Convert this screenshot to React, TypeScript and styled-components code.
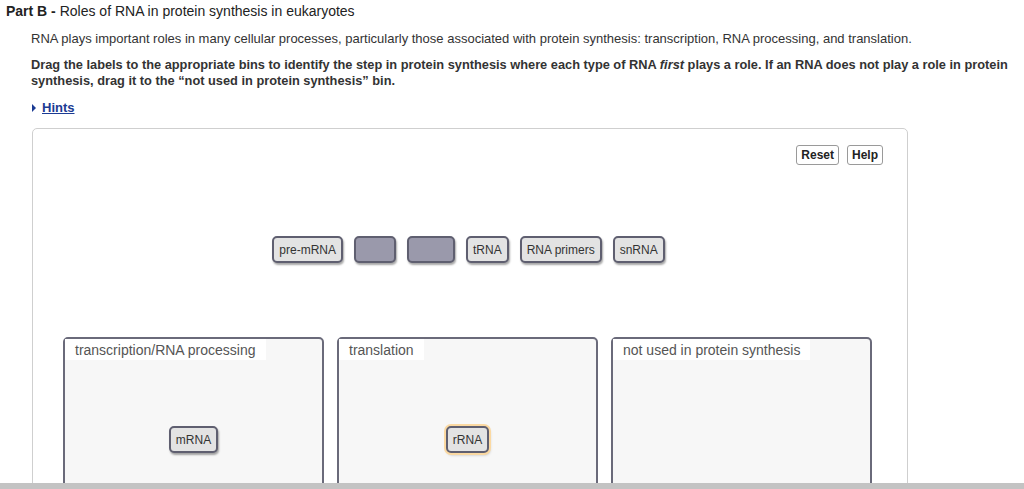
import React from 'react'
import styled, { createGlobalStyle } from 'styled-components'

const GlobalStyle = createGlobalStyle`
  html, body {
    margin: 0;
    padding: 0;
    background: #fff;
    font-family: "Liberation Sans", Arial, sans-serif;
    color: #333;
  }
`

const Page = styled.div`
  height: 489px;
  overflow: hidden;
  padding: 3px 6px 0;
  box-sizing: border-box;
`

const Title = styled.h2`
  margin: 0;
  font-size: 14px;
  line-height: 17px;
  font-weight: normal;
  color: #222;

  b {
    font-weight: bold;
  }
`

const Content = styled.div`
  padding-left: 25px;
`

const Intro = styled.p`
  margin: 11px 0 0;
  font-size: 13px;
  line-height: 16px;
  color: #333;
`

const Instructions = styled.p`
  margin: 10px 0 0;
  font-size: 12.8px;
  line-height: 16px;
  font-weight: bold;
  color: #333;
`

const HintsToggle = styled.div`
  margin-top: 11px;
  display: flex;
  align-items: center;
  gap: 6px;
  font-size: 13px;
  line-height: 16px;
  font-weight: bold;

  a {
    color: #1b3b93;
    text-decoration: underline;
  }
`

const Caret = styled.span`
  width: 0;
  height: 0;
  margin-left: 1px;
  border-left: 4px solid #1b3b93;
  border-top: 4px solid transparent;
  border-bottom: 4px solid transparent;
`

const Panel = styled.div`
  margin: 12px 0 0 1px;
  width: 876px;
  height: 420px;
  box-sizing: border-box;
  border: 1px solid #cfcfcf;
  border-radius: 5px;
  padding: 16px 24px 0 30px;
`

const Toolbar = styled.div`
  display: flex;
  justify-content: flex-end;
  gap: 8px;
`

const ToolButton = styled.button`
  height: 20px;
  padding: 0 4px;
  font-family: "Liberation Sans", Arial, sans-serif;
  font-size: 12px;
  font-weight: bold;
  color: #222;
  background: #fff;
  border: 1px solid #9a9a9a;
  border-radius: 3px;
`

const LabelRow = styled.div`
  margin-top: 71px;
  display: flex;
  justify-content: center;
  gap: 11px;
  padding-right: 9px;
`

const Label = styled.div<{ $blank?: boolean; $width?: number; $focus?: boolean }>`
  height: 27px;
  box-sizing: border-box;
  ${({ $width }) => ($width ? `width: ${$width}px;` : 'padding: 0 5px;')}
  display: flex;
  align-items: center;
  justify-content: center;
  font-size: 12px;
  color: #333;
  background: ${({ $blank }) => ($blank ? '#9a99ab' : '#e3e3e3')};
  border: 2px solid #5f5f70;
  border-radius: 5px;
  box-shadow: ${({ $focus }) =>
    $focus
      ? '0 0 0 2px #fbd9a2, 1px 2px 3px rgba(0, 0, 0, 0.25)'
      : '1px 2px 2px rgba(0, 0, 0, 0.35)'};
`

const Bins = styled.div`
  margin-top: 74px;
  display: grid;
  grid-template-columns: repeat(3, 261px);
  gap: 13px;
`

const Bin = styled.div`
  height: 200px;
  box-sizing: border-box;
  border: 2px solid #6a6a7a;
  border-radius: 5px;
  background: #f7f7f7;
  display: flex;
  flex-direction: column;
  align-items: flex-start;
`

const BinTitle = styled.div`
  background: #fff;
  padding: 3px 10px 2px;
  font-size: 14px;
  line-height: 16px;
  color: #555;
`

const BinBody = styled.div`
  align-self: stretch;
  display: flex;
  justify-content: center;
  padding-top: 66px;
`

const ScrollBar = styled.div`
  position: fixed;
  left: 0;
  right: 0;
  bottom: 0;
  height: 6px;
  background: #c3c3c3;
`

const labels = [
  { text: 'pre-mRNA' },
  { blank: true, width: 42 },
  { blank: true, width: 48 },
  { text: 'tRNA' },
  { text: 'RNA primers' },
  { text: 'snRNA' },
]

const bins = [
  { title: 'transcription/RNA processing', item: 'mRNA' },
  { title: 'translation', item: 'rRNA', focus: true },
  { title: 'not used in protein synthesis' },
]

const App: React.FC = () => {
  return (
    <Page>
      <GlobalStyle />
      <Title>
        <b>Part B -</b> Roles of RNA in protein synthesis in eukaryotes
      </Title>
      <Content>
        <Intro>
          RNA plays important roles in many cellular processes, particularly those associated with protein
          synthesis: transcription, RNA processing, and translation.
        </Intro>
        <Instructions>
          Drag the labels to the appropriate bins to identify the step in protein synthesis where each type of RNA{' '}
          <i>first</i> plays a role. If an RNA does not play a role in protein synthesis, drag it to the “not used in
          protein synthesis” bin.
        </Instructions>
        <HintsToggle>
          <Caret />
          <a>Hints</a>
        </HintsToggle>
        <Panel>
          <Toolbar>
            <ToolButton>Reset</ToolButton>
            <ToolButton>Help</ToolButton>
          </Toolbar>
          <LabelRow>
            {labels.map((l, i) => (
              <Label key={i} $blank={l.blank} $width={l.width}>
                {l.text}
              </Label>
            ))}
          </LabelRow>
          <Bins>
            {bins.map((b) => (
              <Bin key={b.title}>
                <BinTitle>{b.title}</BinTitle>
                <BinBody>{b.item && <Label $focus={b.focus}>{b.item}</Label>}</BinBody>
              </Bin>
            ))}
          </Bins>
        </Panel>
      </Content>
      <ScrollBar />
    </Page>
  )
}

export default App
